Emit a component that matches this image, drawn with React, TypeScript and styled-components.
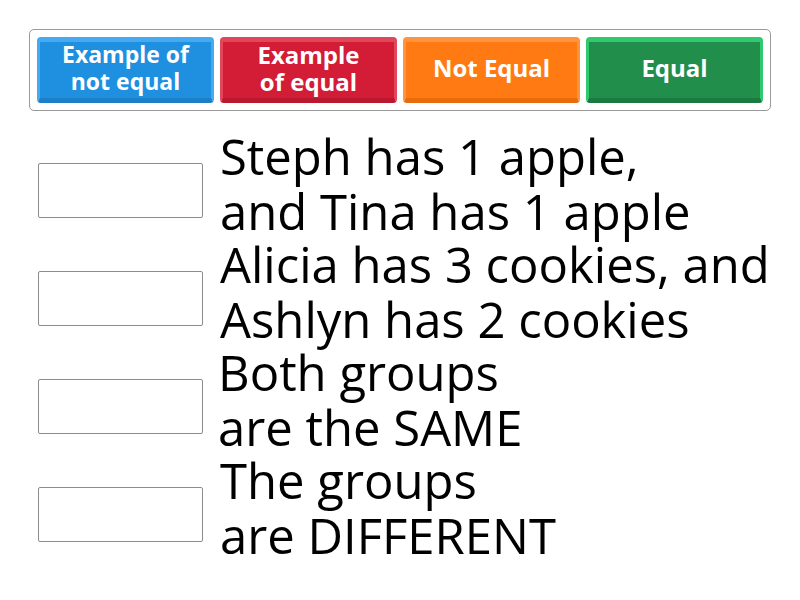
import * as React from "react";
import styled, { createGlobalStyle } from "styled-components";

const GlobalStyle = createGlobalStyle`
  html, body {
    margin: 0;
    padding: 0;
    background: #fff;
    font-family: "Open Sans", "Noto Sans", sans-serif;
  }
`;

const Page = styled.div`
  width: 800px;
  height: 600px;
  padding: 29px 29px 0 29px;
  box-sizing: border-box;
`;

const Toolbar = styled.div`
  display: grid;
  grid-template-columns: repeat(4, 177px);
  gap: 6px;
  padding: 7px;
  border: 1px solid #9a9a9a;
  border-radius: 5px;
  width: 742px;
  box-sizing: border-box;
`;

type Tone = { light: string; base: string; dark: string };

const tones: Record<string, Tone> = {
  blue: { light: "#45aaf0", base: "#1f90e0", dark: "#1c7fc8" },
  red: { light: "#e24659", base: "#d31c35", dark: "#b9182e" },
  orange: { light: "#ff9440", base: "#ff7a12", dark: "#e86c0c" },
  green: { light: "#2fc96e", base: "#218e4c", dark: "#1b7a41" }
};

const Tile = styled.div<{ $tone: Tone; $size: number }>`
  height: 66px;
  box-sizing: border-box;
  border-radius: 4px;
  border-style: solid;
  border-width: 5px 3px 5px 3px;
  border-color: ${p => p.$tone.light} ${p => p.$tone.light}
    ${p => p.$tone.dark} ${p => p.$tone.light};
  background: ${p => p.$tone.base};
  display: flex;
  align-items: center;
  justify-content: center;
  text-align: center;
  color: #fff;
  font-weight: 700;
  font-size: ${p => p.$size}px;
  line-height: 27px;
  padding: 0 20px 5px;
`;

const List = styled.div`
  display: flex;
  flex-direction: column;
  margin-top: 25px;
`;

const Row = styled.div`
  display: flex;
  align-items: center;
  height: 108px;
`;

const Slot = styled.div`
  width: 165px;
  height: 55px;
  box-sizing: border-box;
  border: 1px solid #8c8c8c;
  border-radius: 2px;
  margin-left: 9px;
  flex-shrink: 0;
`;

const Statement = styled.div<{ $shift: number }>`
  margin-left: ${p => 15 + p.$shift}px;
  margin-top: -12px;
  font-size: 49px;
  line-height: 55px;
  color: #000;
  white-space: nowrap;
`;

const items = [
  { lines: ["Steph has 1 apple,", "and Tina has 1 apple"], shift: 2 },
  { lines: ["Alicia has 3 cookies, and", "Ashlyn has 2 cookies"], shift: 2 },
  { lines: ["Both groups", "are the SAME"], shift: 0 },
  { lines: ["The groups", "are DIFFERENT"], shift: 2 }
];

const App: React.FC = () => (
  <>
    <GlobalStyle />
    <Page>
      <Toolbar>
        <Tile $tone={tones.blue} $size={23}>Example of not equal</Tile>
        <Tile $tone={tones.red} $size={24}>Example of equal</Tile>
        <Tile $tone={tones.orange} $size={24}>Not Equal</Tile>
        <Tile $tone={tones.green} $size={24}>Equal</Tile>
      </Toolbar>
      <List>
        {items.map(item => (
          <Row key={item.lines[0]}>
            <Slot />
            <Statement $shift={item.shift}>
              {item.lines[0]}
              <br />
              {item.lines[1]}
            </Statement>
          </Row>
        ))}
      </List>
    </Page>
  </>
);

export default App;
